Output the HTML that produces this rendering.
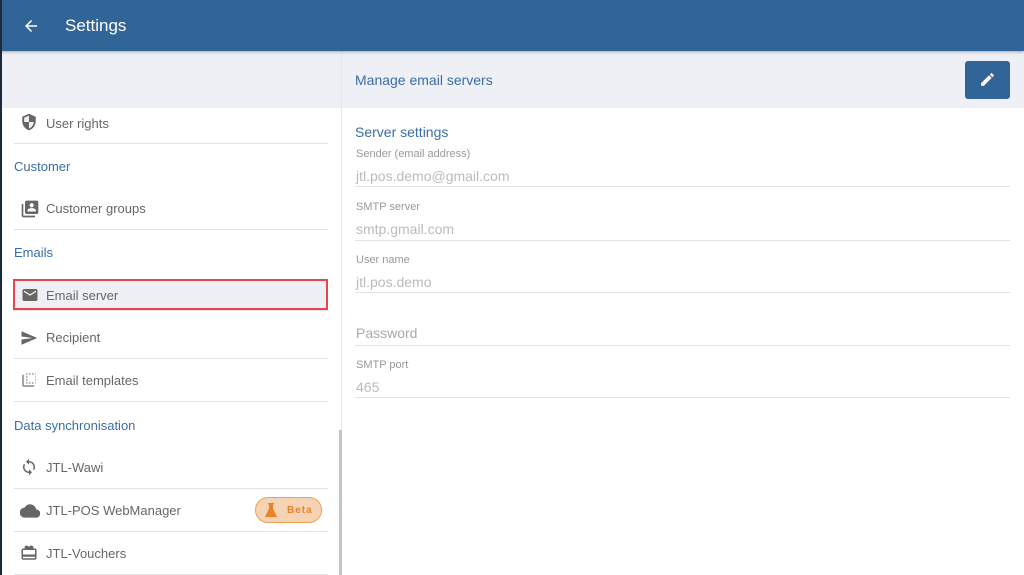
<!DOCTYPE html>
<html><head><style>
*{margin:0;padding:0;box-sizing:border-box}
body{width:1024px;height:575px;overflow:hidden;background:#fff;font-family:"Liberation Sans",sans-serif;position:relative}
.a{position:absolute}
.hdr{left:0;top:0;width:1024px;height:51px;background:#326597;border-left:2px solid #1e2a38;box-shadow:0 1px 3px rgba(0,0,0,.3);z-index:2}
.band{top:51px;height:57px;background:#eff0f5}
.item{position:absolute;left:14px;width:314px;height:43px;border-bottom:1px solid #e2e2e2;font-size:13px;color:#666}
.item span{position:absolute;left:32px;top:14px}
.item svg{position:absolute;left:6px;top:12px}
.sec{position:absolute;left:14px;font-size:13px;color:#3a6ea5}
.lbl{position:absolute;left:356px;font-size:11px;color:#999}
.val{position:absolute;left:356px;font-size:14px;color:#bbb}
.ln{position:absolute;left:355px;width:655px;height:1px;background:#e2e2e2}
</style></head><body>
<div class="a hdr"></div>
<svg class="a" style="left:22px;top:17px;z-index:3" width="18" height="18" viewBox="0 0 24 24"><path d="M20 11H7.8l5.6-5.6L12 4l-8 8 8 8 1.4-1.4L7.8 13H20z" fill="#fff"/></svg>
<div class="a" style="left:65px;top:16px;font-size:17px;color:#fff;z-index:3">Settings</div>
<div class="a" style="left:0;top:51px;width:2px;height:524px;background:#1e2a38"></div>
<div class="a band" style="left:2px;width:339px"></div>
<div class="a band" style="left:342px;width:682px"></div>
<div class="a" style="left:341px;top:51px;width:1px;height:524px;background:#e6e6ea"></div>
<div class="a" style="left:339px;top:430px;width:3px;height:145px;background:#c4c4c4"></div>

<div class="item" style="top:101px;height:43px"><svg width="18" height="18" viewBox="0 0 24 24"><path d="M12 1L3 5v6c0 5.5 3.8 10.7 9 12 5.2-1.3 9-6.5 9-12V5z" fill="#666"/><path d="M12 4v8H5.5V6.3L12 3.5zM12 12h6.5c-.5 4-3 7.5-6.5 8.6z" fill="#fff" opacity=".9"/></svg><span style="top:15px">User rights</span></div>
<div class="sec" style="top:159px">Customer</div>
<div class="item" style="top:187px"><svg width="20" height="20" viewBox="0 0 24 24"><path d="M4 6H2v14c0 1.1.9 2 2 2h14v-2H4zm16-4H8c-1.1 0-2 .9-2 2v12c0 1.1.9 2 2 2h12c1.1 0 2-.9 2-2V4c0-1.1-.9-2-2-2zm-6 3a2.5 2.5 0 110 5 2.5 2.5 0 010-5zm5 10H9v-1.5c0-1.7 3.3-2.5 5-2.5s5 .8 5 2.5z" fill="#666"/></svg><span>Customer groups</span></div>
<div class="sec" style="top:245px">Emails</div>
<div class="a" style="left:13px;top:279px;width:315px;height:31px;background:#eff0f5;border:2px solid #e8464e"></div>
<div class="a" style="left:14px;top:310px;width:314px;height:1px;background:#e2e2e2"></div>
<svg class="a" style="left:21px;top:286px" width="18" height="18" viewBox="0 0 24 24"><path d="M20 4H4c-1.1 0-2 .9-2 2v12c0 1.1.9 2 2 2h16c1.1 0 2-.9 2-2V6c0-1.1-.9-2-2-2zm0 4l-8 5-8-5V6l8 5 8-5z" fill="#666"/></svg>
<div class="a" style="left:46px;top:288px;font-size:13px;color:#666">Email server</div>
<div class="item" style="top:316px"><svg width="18" height="18" viewBox="0 0 24 24" style="top:13px"><path d="M2 21l21-9L2 3v7l15 2-15 2z" fill="#666"/></svg><span>Recipient</span></div>
<div class="item" style="top:359px"><svg width="18" height="18" viewBox="0 0 24 24"><path d="M3 5h2v14h14v2H5c-1.1 0-2-.9-2-2z" fill="#888"/><path d="M8 3h2v2H8zm4 0h2v2h-2zm4 0h2v2h-2zm4 0h1v2h-1zm0 4h1v2h-1zm0 4h1v2h-1zm0 4h1v2h-1zM8 7h2v2H8zm0 4h2v2H8zm0 4h2v2H8zm4 0h2v2h-2zm4 0h2v2h-2z" fill="#999"/></svg><span>Email templates</span></div>
<div class="sec" style="top:418px">Data synchronisation</div>
<div class="item" style="top:446px"><svg width="18" height="18" viewBox="0 0 24 24"><path d="M12 4V1L8 5l4 4V6c3.3 0 6 2.7 6 6 0 1-.3 2-.7 2.8l1.5 1.5C19.5 15 20 13.6 20 12c0-4.4-3.6-8-8-8zm0 14c-3.3 0-6-2.7-6-6 0-1 .3-2 .7-2.8L5.2 7.7C4.5 9 4 10.4 4 12c0 4.4 3.6 8 8 8v3l4-4-4-4z" fill="#666"/></svg><span>JTL-Wawi</span></div>
<div class="item" style="top:489px"><svg width="20" height="20" viewBox="0 0 24 24"><path d="M19.4 10A7.5 7.5 0 005.4 8 6 6 0 006 20h13a5 5 0 00.4-10z" fill="#666"/></svg><span>JTL-POS WebManager</span>
<div class="a" style="left:241px;top:8px;width:67px;height:26px;border-radius:13px;background:#f5d3b5;border:1px solid #f0a050;font-size:10px;font-weight:bold;color:#e8832a;letter-spacing:1px"><svg style="left:9px;top:5px" width="12" height="14" viewBox="0 0 12 14"><path d="M3 0h6v1.5H8v4l4 8.5H0l4-8.5v-4H3z" fill="#e8832a"/></svg><span style="left:31px;top:7px">Beta</span></div></div>
<div class="item" style="top:532px"><svg width="18" height="18" viewBox="0 0 24 24"><path d="M20 6h-2.2c.1-.3.2-.7.2-1a3 3 0 00-5.5-1.7L12 4l-.5-.7A3 3 0 006 5c0 .3.1.7.2 1H4c-1.1 0-2 .9-2 2v11c0 1.1.9 2 2 2h16c1.1 0 2-.9 2-2V8c0-1.1-.9-2-2-2zm0 13H4v-2h16zm0-5H4V8h16z" fill="#666"/></svg><span>JTL-Vouchers</span></div>

<div class="a" style="left:355px;top:72px;font-size:14px;color:#3a6ea5">Manage email servers</div>
<div class="a" style="left:965px;top:61px;width:45px;height:38px;background:#326597;border-radius:3px"></div>
<svg class="a" style="left:979px;top:71px" width="17" height="17" viewBox="0 0 24 24"><path d="M3 17.2V21h3.8L17.8 9.9 14 6.2zM20.7 7c.4-.4.4-1 0-1.4l-2.3-2.3c-.4-.4-1-.4-1.4 0l-1.8 1.8 3.7 3.7z" fill="#fff"/></svg>
<div class="a" style="left:355px;top:124px;font-size:14px;color:#3a6ea5">Server settings</div>
<div class="lbl" style="top:148px">Sender (email address)</div>
<div class="val" style="top:168px">jtl.pos.demo@gmail.com</div>
<div class="ln" style="top:186px"></div>
<div class="lbl" style="top:201px">SMTP server</div>
<div class="val" style="top:221px">smtp.gmail.com</div>
<div class="ln" style="top:240px"></div>
<div class="lbl" style="top:254px">User name</div>
<div class="val" style="top:274px">jtl.pos.demo</div>
<div class="ln" style="top:292px"></div>
<div class="val" style="top:325px;color:#aaa">Password</div>
<div class="ln" style="top:345px"></div>
<div class="lbl" style="top:359px">SMTP port</div>
<div class="val" style="top:379px">465</div>
<div class="ln" style="top:397px"></div>
</body></html>
